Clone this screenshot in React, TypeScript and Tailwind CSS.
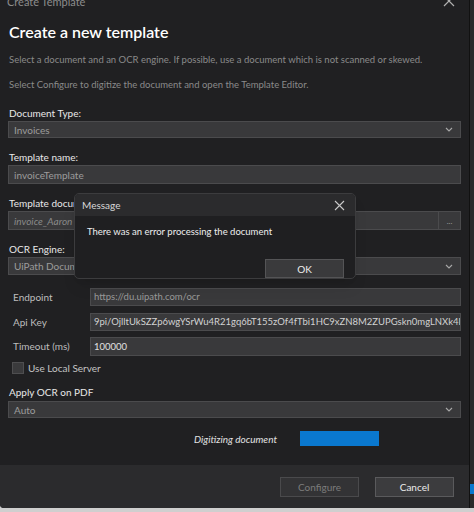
import React from "react";

const font = { fontFamily: 'Lato, "Noto Sans", sans-serif' };

function Chevron() {
  return (
    <svg width="8" height="5" viewBox="0 0 8 5" className="shrink-0">
      <path d="M1 1l3 3 3-3" fill="none" stroke="#a8a8a8" strokeWidth="1.1" />
    </svg>
  );
}

function Select({ value, h }: { value: string; h: string }) {
  return (
    <div className={`${h} flex items-center justify-between border border-[#4b4b4d] bg-[#39393b] pl-[5px] pr-[7px]`}>
      <span className="text-[10px] leading-none text-[#9c9c9c]">{value}</span>
      <Chevron />
    </div>
  );
}

function Label({ text, mt }: { text: string; mt: string }) {
  return <div className={`${mt} h-[16px] pl-[1px] text-[10px] leading-[16px] text-[#e8e8e8]`}>{text}</div>;
}

function Row({ label, value, mt, h, color }: { label: string; value: string; mt: string; h: string; color: string }) {
  return (
    <div className={`${mt} flex ${h}`}>
      <div className="flex w-[82px] items-center pl-[5px] text-[10px] text-[#bdbdbd]">{label}</div>
      <div className="flex min-w-0 flex-1 items-center overflow-hidden whitespace-nowrap border border-[#4b4b4d] bg-[#39393b] pl-[3px]">
        <span className={`text-[9.5px] leading-none ${color}`}>{value}</span>
      </div>
    </div>
  );
}

export default function App() {
  return (
    <div className="relative flex h-[512px] w-[474px] flex-col overflow-hidden bg-[#c9c9c9]" style={font}>
      <div className="flex h-[508px]">
        <div className="flex w-[470px] flex-col rounded-bl-[4px] border-r border-[#111] bg-[#202022]">
          {/* title bar */}
          <div className="flex h-[18px] items-start justify-between pl-[7px] pr-[14px]">
            <span className="-mt-[4px] text-[11px] leading-[12px] text-[#8c8c8c]">Create Template</span>
            <svg width="12" height="12" viewBox="0 0 12 12" className="-mt-[5px]">
              <path d="M1 1l10 10M11 1L1 11" stroke="#b0b0b0" strokeWidth="1.2" />
            </svg>
          </div>

          <div className="flex flex-1 flex-col px-[8px]">
            <div className="h-[28px] pl-[1px] text-[16px] font-semibold leading-[28px] text-white">Create a new template</div>
            <div className="mt-[6px] h-[16px] whitespace-nowrap pl-[1px] text-[9.5px] leading-[16px] text-[#8a8a8a]">
              Select a document and an OCR engine. If possible, use a document which is not scanned or skewed.
            </div>
            <div className="mt-[9px] h-[16px] pl-[1px] text-[9.5px] leading-[16px] text-[#8a8a8a]">
              Select Configure to digitize the document and open the Template Editor.
            </div>

            <Label text="Document Type:" mt="mt-[12px]" />
            <Select value="Invoices" h="h-[17px]" />

            <Label text="Template name:" mt="mt-[11px]" />
            <div className="flex h-[19px] items-center border border-[#4b4b4d] bg-[#39393b] pl-[5px]">
              <span className="text-[10px] leading-none text-[#9c9c9c]">invoiceTemplate</span>
            </div>

            <Label text="Template document:" mt="mt-[11px]" />
            <div className="flex h-[19px]">
              <div className="flex flex-1 items-center border border-[#4b4b4d] bg-[#39393b] pl-[5px]">
                <span className="text-[10px] italic leading-none text-[#8a8a8a]">invoice_Aaron Bergman.pdf</span>
              </div>
              <div className="flex w-[22px] items-end justify-center border border-l-0 border-[#4b4b4d] bg-[#39393b] pb-[4px] text-[8px] leading-none text-[#9c9c9c]">
                ...
              </div>
            </div>

            <Label text="OCR Engine:" mt="mt-[11px]" />
            <Select value="UiPath Document OCR" h="h-[18px]" />

            <Row label="Endpoint" value="https://du.uipath.com/ocr" mt="mt-[13px]" h="h-[18px]" color="text-[#9a9a9a]" />
            <Row
              label="Api Key"
              value="9pi/OjlltUkSZZp6wgYSrWu4R21gq6bT155zOf4fTbi1HC9xZN8M2ZUPGskn0mgLNXk4lzzgNQ"
              mt="mt-[7px]"
              h="h-[18px]"
              color="text-[#d2d2d2]"
            />
            <Row label="Timeout (ms)" value="100000" mt="mt-[6px]" h="h-[19px]" color="text-[#e0e0e0]" />

            <div className="mt-[5px] flex h-[14px] items-center pl-[4px]">
              <div className="h-[12px] w-[12px] border border-[#4e4e50] bg-[#3a3a3c]" />
              <span className="ml-[4px] text-[10px] leading-none text-[#c4c4c4]">Use Local Server</span>
            </div>

            <Label text="Apply OCR on PDF" mt="mt-[9px]" />
            <div className="mt-[1px]">
              <Select value="Auto" h="h-[17px]" />
            </div>

            <div className="mt-[13px] flex h-[15px] items-center">
              <span className="ml-[186px] w-[106px] text-[10px] italic leading-none text-[#e2e2e2]">Digitizing document</span>
              <div className="h-[15px] w-[79px] bg-[#0a78cf]" />
            </div>
          </div>

          {/* footer */}
          <div className="flex h-[43px] items-start justify-end gap-[16px] rounded-bl-[4px] bg-[#2b2b2d] pr-[15px] pt-[12px]">
            <button className="h-[20px] w-[79px] border border-[#4a4a4c] bg-[#333335] text-[10px] leading-none text-[#7c7c7c]">
              Configure
            </button>
            <button className="h-[20px] w-[79px] border border-[#5a5a5c] bg-[#3c3c3e] text-[10px] leading-none text-[#ececec]">
              Cancel
            </button>
          </div>
        </div>
        <div className="flex flex-1 flex-col bg-[#2a2a2a]">
          <div className="mt-[484px] h-[10px] bg-[#0a78cf]" />
        </div>
      </div>
      <div className="flex-1 bg-[#cfcfcf]" />

      {/* message box */}
      <div className="absolute left-[74px] top-[193px] flex h-[86px] w-[282px] flex-col overflow-hidden rounded-[5px] border border-[#3c3c3e] bg-[#1f1f21] shadow-lg">
        <div className="flex h-[22px] items-center justify-between bg-[#2b2b2d] pl-[7px] pr-[10px]">
          <span className="text-[10px] leading-none text-[#d8d8d8]">Message</span>
          <svg width="11" height="11" viewBox="0 0 11 11">
            <path d="M1 1l9 9M10 1L1 10" stroke="#c8c8c8" strokeWidth="1.1" />
          </svg>
        </div>
        <div className="mt-[9px] pl-[12px] text-[9.5px] leading-[14px] text-[#eeeeee]">There was an error processing the document</div>
        <div className="mt-[20px] flex justify-end pr-[11px]">
          <button className="h-[19px] w-[79px] border border-[#545456] bg-[#3a3a3c] text-[10px] leading-none text-[#eeeeee]">OK</button>
        </div>
      </div>
    </div>
  );
}
